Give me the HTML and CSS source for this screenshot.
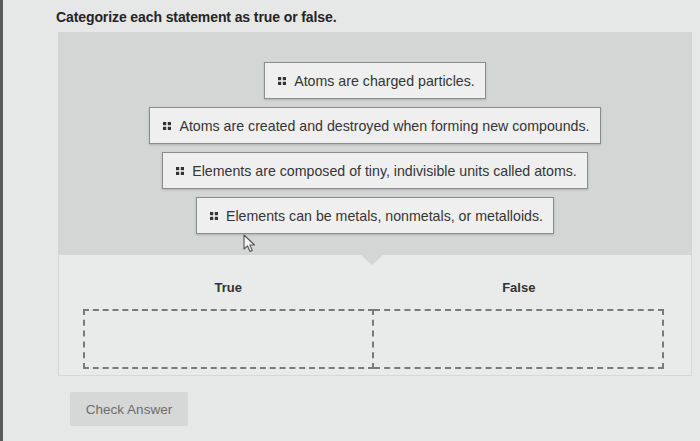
FILE: index.html
```html
<!DOCTYPE html>
<html>
<head>
<meta charset="utf-8">
<link rel="stylesheet" href="styles.css">
</head>
<body>
<div class="page">
  <h1 class="title">Categorize each statement as true or false.</h1>
  <div class="widget">
    <div class="pool">
      <div class="card"><svg class="handle" viewBox="0 0 8 8"><rect x="0" y="0" width="3.2" height="3.2"/><rect x="4.8" y="0" width="3.2" height="3.2"/><rect x="0" y="4.8" width="3.2" height="3.2"/><rect x="4.8" y="4.8" width="3.2" height="3.2"/></svg><span>Atoms are charged particles.</span></div>
      <div class="card"><svg class="handle" viewBox="0 0 8 8"><rect x="0" y="0" width="3.2" height="3.2"/><rect x="4.8" y="0" width="3.2" height="3.2"/><rect x="0" y="4.8" width="3.2" height="3.2"/><rect x="4.8" y="4.8" width="3.2" height="3.2"/></svg><span>Atoms are created and destroyed when forming new compounds.</span></div>
      <div class="card"><svg class="handle" viewBox="0 0 8 8"><rect x="0" y="0" width="3.2" height="3.2"/><rect x="4.8" y="0" width="3.2" height="3.2"/><rect x="0" y="4.8" width="3.2" height="3.2"/><rect x="4.8" y="4.8" width="3.2" height="3.2"/></svg><span>Elements are composed of tiny, indivisible units called atoms.</span></div>
      <div class="card"><svg class="handle" viewBox="0 0 8 8"><rect x="0" y="0" width="3.2" height="3.2"/><rect x="4.8" y="0" width="3.2" height="3.2"/><rect x="0" y="4.8" width="3.2" height="3.2"/><rect x="4.8" y="4.8" width="3.2" height="3.2"/></svg><span>Elements can be metals, nonmetals, or metalloids.</span></div>
      <svg class="cursor" viewBox="0 0 13 19"><path d="M1 1 L1 15 L4.5 11.8 L7 17.5 L9.3 16.5 L6.9 11 L11.5 11 Z" fill="#f4f4f4" stroke="#555" stroke-width="1.1" stroke-linejoin="round"/></svg>
    </div>
    <div class="bins">
      <div class="bin">
        <div class="bin-label">True</div>
        <div class="drop drop-left"></div>
      </div>
      <div class="bin">
        <div class="bin-label">False</div>
        <div class="drop drop-right"></div>
      </div>
    </div>
  </div>
  <button class="check">Check Answer</button>
</div>
</body>
</html>
```

FILE: styles.css
```css
html, body {
  margin: 0;
  padding: 0;
}
body {
  width: 700px;
  height: 441px;
  overflow: hidden;
  background: #e6e7e7;
  border-left: 3px solid #5a5a5a;
  box-sizing: border-box;
  font-family: "Liberation Sans", Arial, sans-serif;
}
.page {
  padding: 9px 0 0 53px;
}
.title {
  margin: 0;
  font-size: 14px;
  line-height: 16px;
  font-weight: bold;
  color: #242424;
  letter-spacing: -0.1px;
}
.widget {
  margin-top: 7px;
  margin-left: 2px;
  width: 634px;
}
.pool {
  position: relative;
  background: #d4d5d5;
  padding: 30px 0 21px;
  display: flex;
  flex-direction: column;
  align-items: center;
  gap: 8px;
}
.pool::after {
  content: "";
  position: absolute;
  left: 303px;
  bottom: -10px;
  border-left: 11px solid transparent;
  border-right: 11px solid transparent;
  border-top: 10px solid #d4d5d5;
}
.card {
  height: 37px;
  box-sizing: border-box;
  display: flex;
  align-items: center;
  gap: 8px;
  padding: 0 10px 0 13px;
  background: #efefef;
  border: 1px solid #8c8c8c;
  box-shadow: 0 1px 2px rgba(0, 0, 0, 0.18);
  font-size: 14.2px;
  color: #353535;
  white-space: nowrap;
}
.handle {
  width: 8px;
  height: 8px;
  fill: #333;
  flex: none;
}
.cursor {
  position: absolute;
  left: 185px;
  top: 202px;
  width: 13px;
  height: 19px;
}
.bins {
  background: #e9eaea;
  border: 1px solid #d6d7d7;
  border-top: none;
  padding: 25px 27px 6px 24px;
  display: grid;
  grid-template-columns: 1fr 1fr;
}
.bin {
  display: flex;
  flex-direction: column;
}
.bin-label {
  text-align: center;
  font-size: 13px;
  line-height: 16px;
  font-weight: bold;
  color: #333;
  margin-bottom: 13px;
}
.drop {
  height: 60px;
  box-sizing: border-box;
  border: 2px dashed #7a7a7a;
}
.drop-right {
  border-left: none;
}
.check {
  display: block;
  margin: 16px 0 0 14px;
  width: 118px;
  height: 34px;
  border: none;
  border-radius: 2px;
  background: #d6d7d7;
  color: #6e6e6e;
  font-family: "Liberation Sans", Arial, sans-serif;
  font-size: 13.5px;
  padding: 0;
}
```
